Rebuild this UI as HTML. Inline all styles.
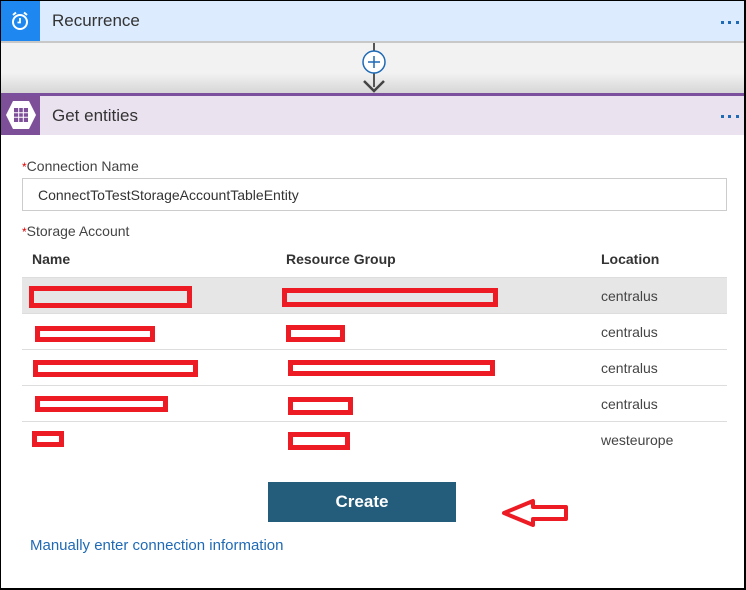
<!DOCTYPE html>
<html><head><style>
*{margin:0;padding:0;box-sizing:border-box}
body{width:746px;height:590px;position:relative;overflow:hidden;background:#fff;font-family:"Liberation Sans",sans-serif;color:#333}
.a{position:absolute}
.t{font-size:14px;color:#444;white-space:nowrap}
.r{position:absolute;border:5px solid #ed1c24}
.line{position:absolute;left:22px;width:705px;height:1px;background:#ddd}
.d{position:absolute;width:3px;height:3px;background:#1f6ab5}
</style></head><body>
<div class="a" style="left:0;top:0;width:746px;height:590px;border:1px solid #000;border-right-width:2px;border-bottom-width:2px"></div>
<div class="a" style="left:1px;top:1px;width:743px;height:40px;background:#dcebfd"></div>
<div class="a" style="left:1px;top:1px;width:39px;height:40px;background:#1e88f0"></div>
<svg class="a" style="left:9px;top:10px" width="22" height="22" viewBox="0 0 22 22"><circle cx="11" cy="12" r="7" fill="none" stroke="#fff" stroke-width="2"/><path d="M11 8v4.5h-2.5" fill="none" stroke="#fff" stroke-width="1.8"/><path d="M4 5l3-2.5M18 5l-3-2.5" stroke="#fff" stroke-width="2"/></svg>
<div class="a" style="left:52px;top:11px;font-size:17px;color:#333">Recurrence</div>
<div class="d" style="left:721px;top:21px"></div><div class="d" style="left:728px;top:21px"></div><div class="d" style="left:736px;top:21px"></div>
<div class="a" style="left:1px;top:41px;width:743px;height:2px;background:#c8c8c8"></div>
<div class="a" style="left:1px;top:43px;width:743px;height:50px;background:linear-gradient(#f2f2f2 60%,#d6d6d6)"></div>
<div class="a" style="left:373px;top:43px;width:2px;height:44px;background:#555"></div>
<svg class="a" style="left:362px;top:50px" width="24" height="44" viewBox="0 0 24 44"><circle cx="12" cy="12" r="11" fill="#fff" stroke="#1f6ab5" stroke-width="1.5"/><path d="M12 6v12M6 12h12" stroke="#1f6ab5" stroke-width="1.5"/><path d="M2 31l10 10 10-10" fill="none" stroke="#444" stroke-width="2.5"/></svg>
<div class="a" style="left:1px;top:93px;width:743px;height:3px;background:#7b4f9b"></div>
<div class="a" style="left:1px;top:96px;width:743px;height:39px;background:#ebe2f0"></div>
<div class="a" style="left:1px;top:96px;width:39px;height:39px;background:#7e4f99"></div>
<svg class="a" style="left:5px;top:100px" width="32" height="30" viewBox="0 0 32 30"><polygon points="8,1 24,1 31,15 24,29 8,29 1,15" fill="#fff"/><rect x="9" y="8" width="14" height="14" fill="#7e4f99"/><path d="M9 12.7h14M9 17.3h14M13.7 8v14M18.3 8v14" stroke="#fff" stroke-width="1"/></svg>
<div class="a" style="left:52px;top:106px;font-size:17px;color:#333">Get entities</div>
<div class="d" style="left:721px;top:115px"></div><div class="d" style="left:728px;top:115px"></div><div class="d" style="left:736px;top:115px"></div>
<div class="a t" style="left:22px;top:158px"><span style="color:#d00;font-size:12px">*</span>Connection Name</div>
<div class="a" style="left:22px;top:178px;width:705px;height:33px;border:1px solid #ccc"></div>
<div class="a t" style="left:38px;top:187px;color:#333">ConnectToTestStorageAccountTableEntity</div>
<div class="a t" style="left:22px;top:223px"><span style="color:#d00;font-size:12px">*</span>Storage Account</div>
<div class="a t" style="left:32px;top:251px;font-weight:bold;color:#333">Name</div>
<div class="a t" style="left:286px;top:251px;font-weight:bold;color:#333">Resource Group</div>
<div class="a t" style="left:601px;top:251px;font-weight:bold;color:#333">Location</div>
<div class="a" style="left:22px;top:277px;width:705px;height:37px;background:#e6e6e6;border-top:1px solid #ddd;border-bottom:1px solid #ddd"></div>
<div class="line" style="top:349px"></div>
<div class="line" style="top:385px"></div>
<div class="line" style="top:421px"></div>
<div class="a t" style="left:601px;top:288px">centralus</div>
<div class="a t" style="left:601px;top:324px">centralus</div>
<div class="a t" style="left:601px;top:360px">centralus</div>
<div class="a t" style="left:601px;top:396px">centralus</div>
<div class="a t" style="left:601px;top:432px">westeurope</div>
<div class="r" style="left:29px;top:286px;width:163px;height:22px"></div>
<div class="r" style="left:282px;top:288px;width:216px;height:19px"></div>
<div class="r" style="left:35px;top:326px;width:120px;height:16px"></div>
<div class="r" style="left:286px;top:325px;width:59px;height:17px"></div>
<div class="r" style="left:33px;top:360px;width:165px;height:17px"></div>
<div class="r" style="left:288px;top:360px;width:207px;height:16px"></div>
<div class="r" style="left:35px;top:396px;width:133px;height:16px"></div>
<div class="r" style="left:288px;top:397px;width:65px;height:18px"></div>
<div class="r" style="left:32px;top:431px;width:32px;height:16px"></div>
<div class="r" style="left:288px;top:432px;width:62px;height:18px"></div>
<div class="a" style="left:268px;top:482px;width:188px;height:40px;background:#245c7c;color:#fff;font-size:17px;font-weight:bold;text-align:center;line-height:40px">Create</div>
<svg class="a" style="left:500px;top:497px" width="70" height="30" viewBox="0 0 70 30"><path d="M4 16L33 4v6h33v12H33v6z" fill="none" stroke="#ed1c24" stroke-width="4" stroke-linejoin="round"/></svg>
<div class="a" style="left:30px;top:537px;font-size:15px;color:#1f6ab5">Manually enter connection information</div>
</body></html>
